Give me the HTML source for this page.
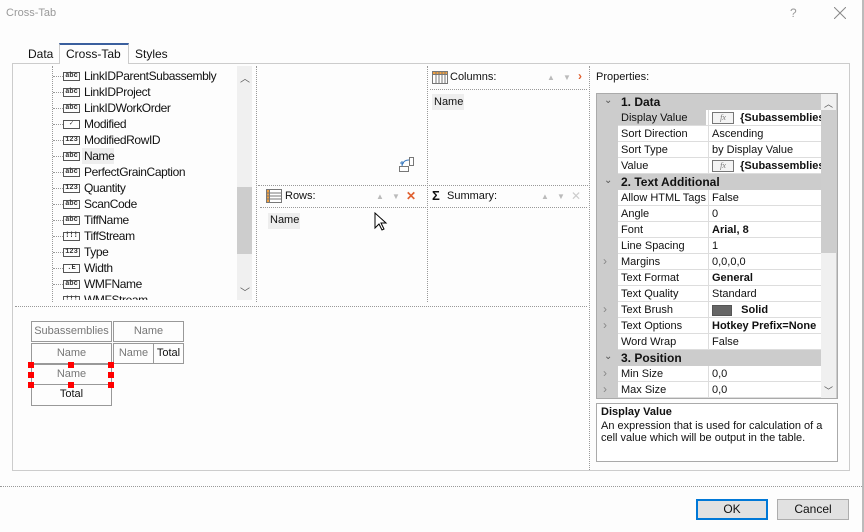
<!DOCTYPE html><html><head><style>
*{box-sizing:border-box;margin:0;padding:0}
body{width:864px;height:532px;background:#fdfdfd;font-family:"Liberation Sans",Arial,sans-serif;font-size:11px;color:#111;position:relative;overflow:hidden}
.a{position:absolute}
.t{position:absolute;white-space:nowrap}
.hd{border-top:1px dotted #999}
.vd{border-left:1px dotted #999}
.ic{position:absolute;left:63px;width:17px;height:9px;border:1px solid #555;font-size:7px;line-height:7px;text-align:center;font-weight:bold;color:#333;font-family:"Liberation Mono",monospace}
.row{position:absolute;left:618px;width:203px;height:16px;border-bottom:1px solid #ddd;background:#fff}
.row .n{position:absolute;left:3px;top:2px}
.row .v{position:absolute;left:90px;top:0;height:16px;border-left:1px solid #ddd;padding-left:3px;padding-top:2px;width:113px;overflow:hidden;white-space:nowrap}
.cat{position:absolute;left:597px;width:224px;height:16px;background:#ccc;font-weight:bold;font-size:12px}
.cell{position:absolute;border:1px solid #999;text-align:center;color:#777;font-size:11px;line-height:18px}
.h{position:absolute;width:6px;height:6px;background:#f00}
.btn{position:absolute;top:499px;height:21px;width:72px;border:1px solid #adadad;background:#e1e1e1;text-align:center;line-height:19px;font-size:12px}
.ar{position:absolute;color:#bbb;font-size:8px}
</style></head><body>
<div class="a" style="left:862px;top:0;width:2px;height:532px;background:#bbb"></div>
<div class="t" style="left:6px;top:7px;color:#999;font-size:11px">Cross-Tab</div>
<div class="t" style="left:790px;top:6px;color:#999;font-size:12px">?</div>
<svg class="a" style="left:834px;top:7px" width="12" height="12"><path d="M0 0L12 12M12 0L0 12" stroke="#888" stroke-width="1"/></svg>
<!-- tabs -->
<div class="t" style="left:28px;top:47px;font-size:12px">Data</div>
<div class="a" style="left:59px;top:43px;width:70px;height:21px;border:1px solid #ccc;border-top:2px solid #3a5f9e;border-bottom:none;background:#fdfdfd;z-index:2"></div>
<div class="t" style="left:66px;top:47px;font-size:12px;z-index:3">Cross-Tab</div>
<div class="t" style="left:135px;top:47px;font-size:12px">Styles</div>
<div class="a" style="left:12px;top:63px;width:838px;height:408px;border:1px solid #ccc"></div>
<!-- tree -->
<div class="a vd" style="left:52px;top:66px;height:236px"></div>
<div class="a" style="left:14px;top:66px;width:222px;height:234px;overflow:hidden" id="tree"></div>
<div class="a" style="left:237px;top:66px;width:15px;height:234px;background:#f0f0f0"></div>
<div class="a" style="left:237px;top:187px;width:15px;height:67px;background:#cdcdcd"></div>
<div class="t" style="left:240px;top:70px;font-size:10px;color:#555">︿</div>
<div class="t" style="left:240px;top:284px;font-size:10px;color:#555">﹀</div>
<div class="a hd" style="left:15px;top:306px;width:572px"></div>
<!-- center -->
<div class="a vd" style="left:256px;top:66px;height:236px"></div>
<div class="a vd" style="left:427px;top:66px;height:236px"></div>
<div class="a vd" style="left:589px;top:66px;height:404px"></div>
<div class="a hd" style="left:258px;top:185px;width:330px"></div>
<div class="a hd" style="left:430px;top:89px;width:157px"></div>
<div class="a hd" style="left:260px;top:207px;width:166px"></div>
<div class="a hd" style="left:430px;top:207px;width:157px"></div>
<svg class="a" style="left:432px;top:70px" width="16" height="14"><rect x="0.5" y="1.5" width="15" height="12" fill="#fff" stroke="#777"/><rect x="0.5" y="1.5" width="15" height="3" fill="#f0a040" stroke="#777"/><path d="M4 2v12M7 2v12M10 2v12M13 2v12" stroke="#777"/></svg>
<div class="t" style="left:450px;top:71px">Columns:</div>
<div class="ar" style="left:547px;top:73px">▲</div><div class="ar" style="left:563px;top:73px">▼</div>
<div class="t" style="left:578px;top:69px;color:#e06030;font-size:12px;font-weight:bold">›</div>
<div class="a" style="left:432px;top:94px;width:32px;height:16px;background:#eee"></div>
<div class="t" style="left:434px;top:96px">Name</div>
<svg class="a" style="left:397px;top:156px" width="18" height="18"><rect x="2.5" y="10.5" width="9" height="5" fill="none" stroke="#777"/><rect x="12.5" y="1.5" width="4" height="8" fill="none" stroke="#777"/><path d="M5 10 Q6 4 12 4" stroke="#3a7ac0" fill="none"/><path d="M3 7h4M5 5v4" stroke="#3a7ac0"/></svg>
<svg class="a" style="left:266px;top:189px" width="16" height="14"><rect x="0.5" y="0.5" width="15" height="13" fill="#fff" stroke="#777"/><rect x="0.5" y="0.5" width="3" height="13" fill="#f0a040" stroke="#777"/><path d="M1 4h15M1 7h15M1 10h15" stroke="#777"/></svg>
<div class="t" style="left:285px;top:190px">Rows:</div>
<div class="ar" style="left:376px;top:192px">▲</div><div class="ar" style="left:392px;top:192px">▼</div>
<div class="t" style="left:406px;top:189px;color:#e06030;font-size:12px;font-weight:bold">✕</div>
<div class="a" style="left:268px;top:213px;width:32px;height:16px;background:#eee"></div>
<div class="t" style="left:270px;top:214px">Name</div>
<svg class="a" style="left:374px;top:212px" width="14" height="20"><path d="M1 1v15l4-4 3 6 2-1-3-6h5z" fill="#fff" stroke="#000"/></svg>
<div class="t" style="left:432px;top:188px;font-weight:bold;font-size:13px">Σ</div>
<div class="t" style="left:447px;top:190px">Summary:</div>
<div class="ar" style="left:541px;top:192px">▲</div><div class="ar" style="left:557px;top:192px">▼</div>
<div class="t" style="left:571px;top:189px;color:#ccc;font-size:12px">✕</div>
<!-- preview table -->
<div class="cell" style="left:31px;top:321px;width:81px;height:21px">Subassemblies</div>
<div class="cell" style="left:113px;top:321px;width:71px;height:21px">Name</div>
<div class="cell" style="left:31px;top:343px;width:81px;height:21px">Name</div>
<div class="cell" style="left:113px;top:343px;width:41px;height:21px">Name</div>
<div class="cell" style="left:153px;top:343px;width:31px;height:21px;color:#111">Total</div>
<div class="cell" style="left:31px;top:364px;width:81px;height:21px">Name</div>
<div class="cell" style="left:31px;top:384px;width:81px;height:22px;color:#111">Total</div>
<div class="h" style="left:28px;top:362px"></div><div class="h" style="left:68px;top:362px"></div><div class="h" style="left:108px;top:362px"></div>
<div class="h" style="left:28px;top:372px"></div><div class="h" style="left:108px;top:372px"></div>
<div class="h" style="left:28px;top:382px"></div><div class="h" style="left:68px;top:382px"></div><div class="h" style="left:108px;top:382px"></div>
<!-- properties -->
<div class="t" style="left:596px;top:71px">Properties:</div>
<div class="a" style="left:596px;top:93px;width:242px;height:306px;border:1px solid #aaa;background:#ccc"></div>
<div id="grid"></div>
<div class="a" style="left:821px;top:94px;width:15px;height:304px;background:#f0f0f0"></div>
<div class="a" style="left:821px;top:110px;width:15px;height:143px;background:#cdcdcd"></div>
<div class="t" style="left:824px;top:97px;font-size:9px;color:#555">︿</div>
<div class="t" style="left:824px;top:384px;font-size:9px;color:#555">﹀</div>
<div class="a" style="left:596px;top:403px;width:242px;height:59px;border:1px solid #aaa;background:#fff"></div>
<div class="t" style="left:601px;top:406px;font-weight:bold;font-size:11px">Display Value</div>
<div class="a" style="left:601px;top:420px;width:235px;font-size:11px;line-height:12px">An expression that is used for calculation of a cell value which will be output in the table.</div>
<div class="a hd" style="left:0;top:486px;width:862px"></div>
<div class="btn" style="left:696px;border:2px solid #0078d7;line-height:17px">OK</div>
<div class="btn" style="left:777px">Cancel</div>
<script>
var items=[["abc","LinkIDParentSubassembly"],["abc","LinkIDProject"],["abc","LinkIDWorkOrder"],["✓","Modified"],["123","ModifiedRowID"],["abc","Name"],["abc","PerfectGrainCaption"],["123","Quantity"],["abc","ScanCode"],["abc","TiffName"],["⁞⁞⁞","TiffStream"],["123","Type"],[".E","Width"],["abc","WMFName"],["⁞⁞⁞","WMFStream"]];
var h="";items.forEach(function(it,i){var y=76+i*16-66;var L=-14;
h+='<div class="a hd" style="left:'+(53+L)+'px;top:'+(y)+'px;width:10px"></div><div class="ic" style="left:'+(63+L)+'px;top:'+(y-4)+'px">'+it[0]+'</div>';
if(it[1]=="Name")h+='<div class="a" style="left:'+(82+L)+'px;top:'+(y-8)+'px;width:32px;height:16px;background:#eee"></div>';
h+='<div class="t" style="left:'+(84+L)+'px;top:'+(y-7)+'px;font-size:12px;letter-spacing:-0.4px">'+it[1]+'</div>';});
document.getElementById("tree").innerHTML=h;
var fx='<span style="display:inline-block;width:22px;height:12px;border:1px solid #777;background:#f4f4f4;font-style:italic;font-size:8px;text-align:center;vertical-align:middle;font-family:serif;color:#777">fx</span>&nbsp;&nbsp;<b>{Subassemblies</b>';
var rows=[["c","1. Data"],["r","Display Value",fx,1],["r","Sort Direction","Ascending"],["r","Sort Type","by Display Value"],["r","Value",fx],["c","2. Text Additional"],["r","Allow HTML Tags","False"],["r","Angle","0"],["r","Font","<b>Arial, 8</b>"],["r","Line Spacing","1"],["r","Margins","0,0,0,0",0,1],["r","Text Format","<b>General</b>"],["r","Text Quality","Standard"],["r","Text Brush","<span style=\"display:inline-block;width:20px;height:11px;border:1px solid #555;background:#666;vertical-align:middle\"></span>&nbsp;&nbsp;&nbsp;<b>Solid</b>",0,1],["r","Text Options","<b>Hotkey Prefix=None</b>",0,1],["r","Word Wrap","False"],["c","3. Position"],["r","Min Size","0,0",0,1],["r","Max Size","0,0",0,1]];
var g="";rows.forEach(function(r,i){var y=94+i*16;
if(r[0]=="c"){g+='<div class="cat" style="top:'+y+'px"><span style="position:absolute;left:7px;top:1px;font-weight:normal;color:#555;font-size:10px">⌄</span><span style="position:absolute;left:24px;top:1px">'+r[1]+'</span></div>';}
else{g+='<div class="row" style="top:'+y+'px"><div class="n" style="width:88px;overflow:hidden;white-space:nowrap;'+(r[3]?'background:#ccc;left:0;padding-left:3px;height:15px;top:0;padding-top:2px':'')+'">'+r[1]+'</div><div class="v">'+r[2]+'</div></div>';
if(r[4])g+='<div class="t" style="left:603px;top:'+(y)+'px;color:#888;font-size:12px">›</div>';}});
document.getElementById("grid").innerHTML=g;
</script>
</body></html>
